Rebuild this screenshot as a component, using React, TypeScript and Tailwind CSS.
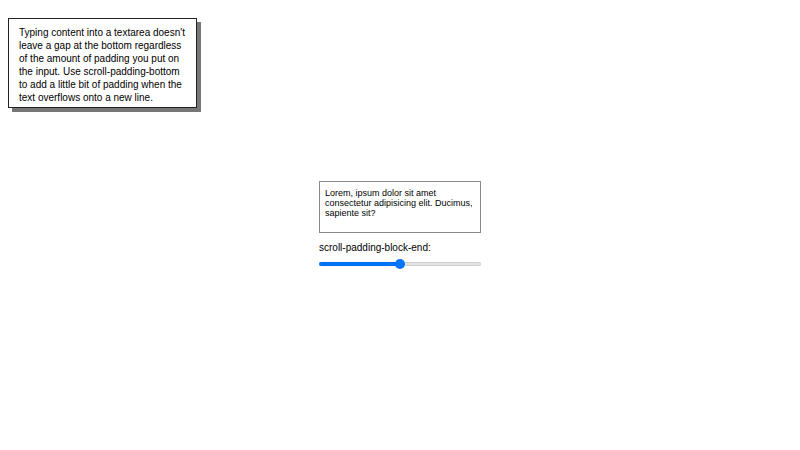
import { useState, type CSSProperties } from 'react'

export default function App() {
  const [pad, setPad] = useState(50)

  return (
    <div className="relative h-[450px] w-[800px] bg-white text-black font-['Liberation_Sans',Arial,sans-serif]">
      <div className="absolute left-[8px] top-[18px] w-[189px] border border-[#222] bg-white pl-[10px] pr-[8px] pt-[7px] pb-[3px] text-[10px] leading-[13px] shadow-[4px_4px_0_#777]">
        Typing content into a textarea doesn't leave a gap at the bottom regardless of the amount of padding you put on
        the input. Use scroll-padding-bottom to add a little bit of padding when the text overflows onto a new line.
      </div>

      <div className="flex h-full items-center justify-center">
        <div className="flex w-[162px] flex-col pt-[1px]">
          <textarea
            className="h-[52px] w-[162px] resize-none border border-[#8a8a8a] px-[5px] pt-[6px] pb-[4px] text-[9px] leading-[10px] outline-none font-['Liberation_Sans',Arial,sans-serif]"
            style={{ scrollPaddingBlockEnd: `${pad / 5}px` }}
            defaultValue="Lorem, ipsum dolor sit amet consectetur adipisicing elit. Ducimus, sapiente sit?"
          />
          <label htmlFor="pad" className="mt-[9px] text-[10px] leading-[12px]">
            scroll-padding-block-end:
          </label>
          <input
            id="pad"
            type="range"
            min={0}
            max={100}
            value={pad}
            onChange={(e) => setPad(Number(e.target.value))}
            style={{ '--p': `${pad}%` } as CSSProperties}
            className="m-0 mt-[4px] h-[12px] w-[162px] cursor-pointer appearance-none bg-transparent [&::-webkit-slider-runnable-track]:h-[4px] [&::-webkit-slider-runnable-track]:rounded-full [&::-webkit-slider-runnable-track]:bg-[linear-gradient(to_right,#0075ff_var(--p),#e2e2e2_var(--p))] [&::-webkit-slider-runnable-track]:shadow-[inset_0_0_0_1px_rgba(0,0,0,0.08)] [&::-webkit-slider-thumb]:mt-[-3px] [&::-webkit-slider-thumb]:h-[10px] [&::-webkit-slider-thumb]:w-[10px] [&::-webkit-slider-thumb]:appearance-none [&::-webkit-slider-thumb]:rounded-full [&::-webkit-slider-thumb]:bg-[#0075ff]"
          />
        </div>
      </div>
    </div>
  )
}
